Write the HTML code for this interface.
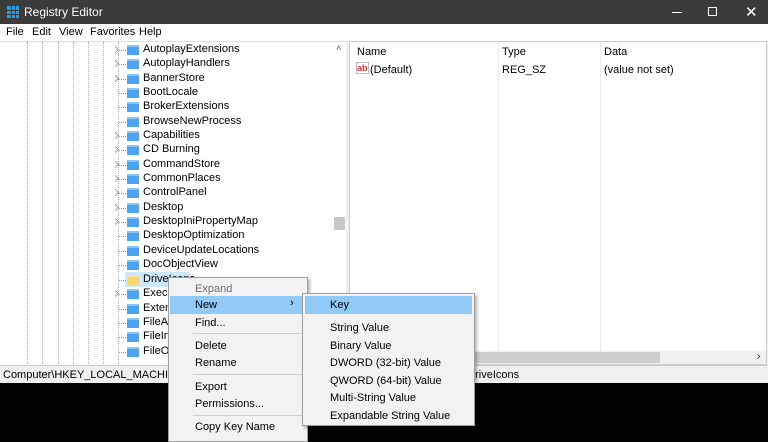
<!DOCTYPE html>
<html><head><style>
*{margin:0;padding:0;box-sizing:border-box}
body{width:768px;height:438px;background:#000;position:relative;overflow:hidden;font-family:"Liberation Sans",sans-serif;font-size:11px;color:#000}
.a{position:absolute}
.title{left:0;top:0;width:768px;height:24px;background:#3b3b3b;color:#fff;font-size:12px}
.menu{left:0;top:24px;width:768px;height:17px;background:#fff}
.menu span{position:absolute;top:2px}
.tree{left:0;top:41px;width:346px;height:324px;background:#fff;border-top:1px solid #ddd}
.vl{position:absolute;top:0;height:324px;border-left:1px dotted #aaa}
.row{position:absolute;left:0;height:14px;width:340px}
.row .t{position:absolute;left:143px;top:0;white-space:nowrap}
.row .f{position:absolute;left:127px;top:2px;width:12px;height:10px;background:#4da3ee;border-top:2px solid #8cc4f2}
.row .d{position:absolute;left:119px;top:7px;width:7px;border-top:1px dotted #999}
.row .e{position:absolute;left:113px;top:4px;width:5px;height:5px;border-right:1px solid #999;border-top:1px solid #999;transform:rotate(45deg)}
.right{left:349px;top:41px;width:418px;height:324px;background:#fff;border:1px solid #ccc}
.status{left:0;top:365px;width:768px;height:18px;background:#f0f0f0;border-top:1px solid #ccc}
.cm{background:#f2f2f2;border:1px solid #a0a0a0;box-shadow:2px 2px 3px rgba(0,0,0,.3)}
.cm .i{position:absolute;white-space:nowrap}
.sep{position:absolute;height:1px;background:#d0d0d0}
.hl{position:absolute;background:#91c9f7}
</style></head><body>
<div class="a" style="left:0;top:24px;width:768px;height:359px;background:#f0f0f0"></div>
<div class="a title">
 <div class="a" style="left:7px;top:6px;width:12px;height:12px;background:
 linear-gradient(#3b3b3b,#3b3b3b) 4px 0/1px 12px no-repeat,linear-gradient(#3b3b3b,#3b3b3b) 8px 0/1px 12px no-repeat,linear-gradient(#3b3b3b,#3b3b3b) 0 4px/12px 1px no-repeat,linear-gradient(#3b3b3b,#3b3b3b) 0 8px/12px 1px no-repeat,#2b9be0"></div>
 <span class="a" style="left:24px;top:5px">Registry Editor</span>
 <div class="a" style="left:672px;top:12px;width:10px;height:1px;background:#fff"></div>
 <div class="a" style="left:708px;top:7px;width:9px;height:9px;border:1px solid #fff"></div>
 <span class="a" style="left:745px;top:3px;font-size:15px">✕</span>
</div>
<div class="a menu"><span style="left:6px">File</span><span style="left:32px">Edit</span><span style="left:59px">View</span><span style="left:90px">Favorites</span><span style="left:139px">Help</span></div>
<div class="a tree">
 <div class="vl" style="left:27px"></div><div class="vl" style="left:42px"></div><div class="vl" style="left:58px"></div><div class="vl" style="left:73px"></div><div class="vl" style="left:88px"></div><div class="vl" style="left:103px"></div><div class="vl" style="left:118px"></div>
 <div class="row" style="top:1px"><i class="e"></i><i class="d"></i><i class="f"></i><span class="t">AutoplayExtensions</span></div>
 <div class="row" style="top:15px"><i class="e"></i><i class="d"></i><i class="f"></i><span class="t">AutoplayHandlers</span></div>
 <div class="row" style="top:30px"><i class="e"></i><i class="d"></i><i class="f"></i><span class="t">BannerStore</span></div>
 <div class="row" style="top:44px"><i class="d"></i><i class="f"></i><span class="t">BootLocale</span></div>
 <div class="row" style="top:58px"><i class="d"></i><i class="f"></i><span class="t">BrokerExtensions</span></div>
 <div class="row" style="top:73px"><i class="d"></i><i class="f"></i><span class="t">BrowseNewProcess</span></div>
 <div class="row" style="top:87px"><i class="e"></i><i class="d"></i><i class="f"></i><span class="t">Capabilities</span></div>
 <div class="row" style="top:101px"><i class="e"></i><i class="d"></i><i class="f"></i><span class="t">CD Burning</span></div>
 <div class="row" style="top:116px"><i class="e"></i><i class="d"></i><i class="f"></i><span class="t">CommandStore</span></div>
 <div class="row" style="top:130px"><i class="e"></i><i class="d"></i><i class="f"></i><span class="t">CommonPlaces</span></div>
 <div class="row" style="top:144px"><i class="e"></i><i class="d"></i><i class="f"></i><span class="t">ControlPanel</span></div>
 <div class="row" style="top:159px"><i class="e"></i><i class="d"></i><i class="f"></i><span class="t">Desktop</span></div>
 <div class="row" style="top:173px"><i class="e"></i><i class="d"></i><i class="f"></i><span class="t">DesktopIniPropertyMap</span></div>
 <div class="row" style="top:187px"><i class="d"></i><i class="f"></i><span class="t">DesktopOptimization</span></div>
 <div class="row" style="top:202px"><i class="d"></i><i class="f"></i><span class="t">DeviceUpdateLocations</span></div>
 <div class="row" style="top:216px"><i class="d"></i><i class="f"></i><span class="t">DocObjectView</span></div>
 <div class="a" style="left:125px;top:230px;width:65px;height:15px;background:#cce8ff"></div>
 <div class="row" style="top:231px"><i class="d"></i><i class="f" style="background:#f7d774;border-top-color:#fbe6a0"></i><span class="t">DriveIcons</span></div>
 <div class="row" style="top:245px"><i class="e"></i><i class="d"></i><i class="f"></i><span class="t">Executive</span></div>
 <div class="row" style="top:260px"><i class="d"></i><i class="f"></i><span class="t">Extensions</span></div>
 <div class="row" style="top:274px"><i class="d"></i><i class="f"></i><span class="t">FileAssociation</span></div>
 <div class="row" style="top:288px"><i class="d"></i><i class="f"></i><span class="t">FileInUse</span></div>
 <div class="row" style="top:303px"><i class="d"></i><i class="f"></i><span class="t">FileOperations</span></div>
 <div class="a" style="left:333px;top:0;width:13px;height:324px;background:#fff"></div>
 <span class="a" style="left:336px;top:1px;font-size:9px;color:#555">˄</span>
 <div class="a" style="left:334px;top:175px;width:11px;height:13px;background:#c8c8c8"></div>
</div>
<div class="a right">
 <div class="a" style="left:148px;top:0;width:1px;height:309px;background:#e5eef8"></div>
 <div class="a" style="left:250px;top:0;width:1px;height:309px;background:#e5eef8"></div>
 <span class="a" style="left:7px;top:4px">Name</span><span class="a" style="left:152px;top:4px">Type</span><span class="a" style="left:254px;top:4px">Data</span>
 <span class="a" style="left:6px;top:20px;width:13px;height:12px;color:#d33;font-size:9px;font-weight:bold;border:1px solid #bbb;background:#fff;line-height:10px">ab</span>
 <span class="a" style="left:20px;top:22px">(Default)</span><span class="a" style="left:152px;top:22px">REG_SZ</span><span class="a" style="left:254px;top:22px">(value not set)</span>
 <div class="a" style="left:0;top:309px;width:416px;height:13px;background:#f0f0f0"></div>
 <div class="a" style="left:0;top:310px;width:310px;height:11px;background:#cdcdcd"></div>
 <span class="a" style="left:407px;top:309px;font-size:10px">›</span>
</div>
<div class="a status"><span class="a" style="left:3px;top:3px">Computer\HKEY_LOCAL_MACHINE\SOFTWARE\Microsoft\Windows\CurrentVersion\Explorer\DriveIcons</span></div>
<div class="a cm" style="left:168px;top:277px;width:140px;height:165px">
 <div class="hl" style="left:1px;top:18px;width:136px;height:18px"></div>
 <span class="i" style="left:26px;top:5px;color:#6d6d6d">Expand</span>
 <span class="i" style="left:26px;top:21px">New</span><span class="i" style="left:121px;top:19px">›</span>
 <span class="i" style="left:26px;top:39px">Find...</span>
 <div class="sep" style="left:24px;top:55px;width:112px"></div>
 <span class="i" style="left:26px;top:62px">Delete</span>
 <span class="i" style="left:26px;top:79px">Rename</span>
 <div class="sep" style="left:24px;top:96px;width:112px"></div>
 <span class="i" style="left:26px;top:103px">Export</span>
 <span class="i" style="left:26px;top:120px">Permissions...</span>
 <div class="sep" style="left:24px;top:137px;width:112px"></div>
 <span class="i" style="left:26px;top:143px">Copy Key Name</span>
</div>
<div class="a cm" style="left:302px;top:293px;width:173px;height:133px">
 <div class="hl" style="left:2px;top:2px;width:167px;height:18px"></div>
 <span class="i" style="left:27px;top:5px">Key</span>
 <span class="i" style="left:27px;top:28px">String Value</span>
 <span class="i" style="left:27px;top:46px">Binary Value</span>
 <span class="i" style="left:27px;top:63px">DWORD (32-bit) Value</span>
 <span class="i" style="left:27px;top:81px">QWORD (64-bit) Value</span>
 <span class="i" style="left:27px;top:98px">Multi-String Value</span>
 <span class="i" style="left:27px;top:116px">Expandable String Value</span>
</div>
</body></html>
